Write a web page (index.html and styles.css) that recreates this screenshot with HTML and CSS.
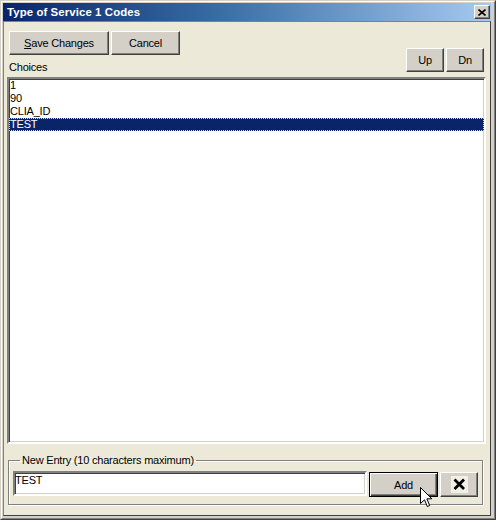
FILE: index.html
```html
<!DOCTYPE html>
<html>
<head>
<meta charset="utf-8">
<link rel="stylesheet" href="styles.css">
</head>
<body>
<div class="window">
  <div class="frame">
    <div class="titlebar">
      <span class="title">Type of Service 1 Codes</span>
      <button class="close" aria-label="Close">
        <svg width="8" height="7" viewBox="0 0 8 7"><path d="M0.5 0.5 L7.5 6.5 M7.5 0.5 L0.5 6.5" stroke="#000" stroke-width="1.6" fill="none"/></svg>
      </button>
    </div>
    <div class="client">
      <div class="top">
        <div class="left">
          <div class="btn-row">
            <button class="btn btn-save"><u>S</u>ave Changes</button>
            <button class="btn btn-cancel">Cancel</button>
          </div>
          <div class="label">Choices</div>
        </div>
        <div class="updn">
          <button class="btn btn-small">Up</button>
          <button class="btn btn-small">Dn</button>
        </div>
      </div>
      <div class="list">
        <div class="item">1</div>
        <div class="item">90</div>
        <div class="item">CLIA_ID</div>
        <div class="item selected">TEST</div>
      </div>
      <fieldset class="group">
        <legend>New Entry (10 characters maximum)</legend>
        <div class="entry">
          <div class="textbox">TEST</div>
          <button class="btn btn-add">Add</button>
          <button class="btn btn-del" aria-label="Delete">
            <svg width="17" height="17" viewBox="0 0 17 17"><rect x="0" y="0" width="17" height="17" fill="#f1efe6"/><path d="M3.5 3.5 L13 13 M13 3.5 L3.5 13" stroke="#000" stroke-width="2.8" fill="none"/></svg>
          </button>
        </div>
      </fieldset>
    </div>
  </div>
  <svg class="cursor" width="13" height="21" viewBox="0 0 13 21"><path d="M0.5 0.5 V16.5 L4.5 12.8 L7.3 19.5 L9.7 18.5 L6.9 11.8 H11.8 Z" fill="#fff" stroke="#000" stroke-width="1" stroke-linejoin="miter"/></svg>
</div>
</body>
</html>
```
FILE: styles.css
```css
* { box-sizing: border-box; }
body {
  margin: 0;
  font-family: "Liberation Sans", Arial, sans-serif;
  font-size: 11px;
  color: #000;
}
.window {
  position: relative;
  width: 496px;
  height: 520px;
  background: #d4d0c8;
  border: 1px solid;
  border-color: #d4d0c8 #404040 #404040 #d4d0c8;
  display: flex;
  flex-direction: column;
}
.frame {
  flex: 1;
  display: flex;
  flex-direction: column;
  border: 1px solid;
  border-color: #fff #808080 #808080 #fff;
  padding: 1px 3px 2px 1px;
}
.titlebar {
  height: 18px;
  flex: none;
  display: flex;
  justify-content: space-between;
  align-items: flex-start;
  background: linear-gradient(to right, #0a246a 0%, #3a6ea5 45%, #a6caf0 100%);
}
.title {
  color: #fff;
  font-weight: bold;
  font-size: 11.4px;
  letter-spacing: 0.1px;
  line-height: 18px;
  padding-left: 4px;
}
.close {
  width: 16px;
  height: 14px;
  margin: 2px 1px 0 0;
  padding: 0;
  background: #d4d0c8;
  border: 1px solid;
  border-color: #fff #404040 #404040 #fff;
  box-shadow: inset -1px -1px #808080;
  display: flex;
  align-items: center;
  justify-content: center;
}
.close svg { display: block; }
.client {
  flex: 1;
  background: #ece9d8;
  border: 1px solid;
  border-color: #808080 #404040 #404040 #808080;
  display: flex;
  flex-direction: column;
}
.top {
  display: flex;
  justify-content: space-between;
  align-items: flex-end;
  padding: 9px 6px 0 5px;
}
.btn-row {
  display: flex;
  gap: 2px;
}
.btn {
  background: #d4d0c8;
  border: 1px solid;
  border-color: #fff #404040 #404040 #fff;
  box-shadow: inset -1px -1px #808080;
  font-family: inherit;
  font-size: 11px;
  letter-spacing: -0.2px;
  color: #000;
  padding: 0;
  height: 24px;
  display: flex;
  align-items: center;
  justify-content: center;
}
.btn u { text-decoration: underline; }
.btn-save { width: 100px; }
.btn-cancel { width: 69px; }
.btn-small { width: 38px; }
.label {
  margin-top: 6px;
  line-height: 13px;
  height: 13px;
  letter-spacing: -0.2px;
}
.updn {
  display: flex;
  gap: 2px;
  margin-bottom: 2px;
}
.list {
  margin: 3px 0 0 3px;
  width: 479px;
  height: 367px;
  background: #fff;
  border: 2px solid;
  border-color: #808080 #fff #fff #808080;
  box-shadow: inset 1px 1px #404040, inset -1px -1px #d4d0c8;
  padding: 0;
}
.item {
  height: 13px;
  line-height: 13px;
  padding-left: 1px;
  letter-spacing: -0.2px;
}
.item.selected {
  background: #0a246a;
  color: #fff;
  outline: 1px dotted #e6dca0;
  outline-offset: -1px;
}
.group {
  margin: 10px 0 0 4px;
  width: 475px;
  border: 1px solid #808080;
  box-shadow: 1px 1px 0 #fff, inset 1px 1px 0 #fff;
  padding: 4px 0 7px 4px;
  min-width: 0;
}
.group legend {
  margin-left: 7px;
  padding: 0 2px;
  line-height: 13px;
  letter-spacing: -0.2px;
}
.entry {
  display: flex;
  align-items: flex-start;
  gap: 2px;
}
.textbox {
  width: 354px;
  height: 25px;
  background: #fff;
  border: 2px solid;
  border-color: #808080 #fff #fff #808080;
  box-shadow: inset 1px 1px #404040, inset -1px -1px #d4d0c8;
  padding: 1px 0 0 0;
  line-height: 13px;
  letter-spacing: -0.2px;
}
.btn-add {
  width: 69px;
  height: 25px;
  margin-top: 1px;
  border: 1px solid #000;
  box-shadow: inset 1px 1px #fff, inset -1px -1px #404040, inset -2px -2px #808080;
}
.btn-del {
  width: 38px;
  height: 25px;
  margin-top: 1px;
}
.btn-del svg { display: block; }
.cursor {
  position: absolute;
  left: 419px;
  top: 486px;
}
```
